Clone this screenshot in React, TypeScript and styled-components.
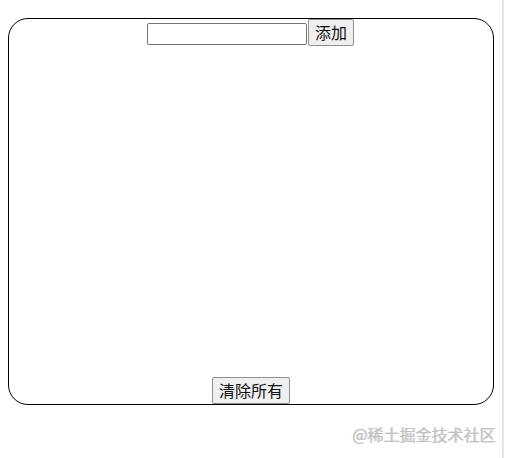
import React, { useState } from "react";
import styled, { createGlobalStyle } from "styled-components";

const GlobalStyle = createGlobalStyle`
  body {
    margin: 8px;
    background: #fff;
    font-family: "Noto Sans CJK SC", "Noto Sans", sans-serif;
  }
`;

const App = () => {
  const [value, setValue] = useState("");
  const [items, setItems] = useState<string[]>([]);

  const handleAdd = () => {
    if (!value.trim()) return;
    setItems((prev) => [...prev, value]);
    setValue("");
  };

  return (
    <>
      <GlobalStyle />
      <Wrapper>
        <TopRow>
          <TextInput value={value} onChange={(e) => setValue(e.target.value)} />
          <Button onClick={handleAdd}>添加</Button>
        </TopRow>
        <List>
          {items.map((item, i) => (
            <Item key={i}>{item}</Item>
          ))}
        </List>
        <Button onClick={() => setItems([])}>清除所有</Button>
      </Wrapper>
      <Watermark>@稀土掘金技术社区</Watermark>
      <ScrollTrack />
    </>
  );
};

const Wrapper = styled.div`
  width: 486px;
  height: 387px;
  margin-top: 10px;
  box-sizing: border-box;
  border: 1px solid #000;
  border-radius: 20px;
  display: flex;
  flex-direction: column;
  align-items: center;
`;

const TopRow = styled.div`
  display: flex;
  align-items: center;
  margin-left: -1px;
`;

const TextInput = styled.input`
  width: 160px;
  height: 22px;
  box-sizing: border-box;
  margin: 2px 1px 0 0;
  padding: 1px 2px;
  border: 1px solid #767676;
  border-radius: 2px;
  font-size: 13px;
`;

const Button = styled.button`
  height: 27px;
  box-sizing: border-box;
  padding: 0 6px;
  font-family: "Noto Sans CJK SC", sans-serif;
  font-size: 16px;
  line-height: 23px;
  color: #111;
  background: #efefef;
  border: 1px solid #8f8f8f;
  border-radius: 2px;
`;

const List = styled.ul`
  flex: 1;
  width: 100%;
  margin: 0;
  padding: 0;
  list-style: none;
`;

const Item = styled.li`
  font-size: 16px;
  padding: 4px 20px;
`;

const Watermark = styled.div`
  position: absolute;
  left: 352px;
  top: 423px;
  font-family: "Noto Sans CJK SC", sans-serif;
  font-size: 16px;
  line-height: 22px;
  white-space: nowrap;
  color: #c2c2c2;
  text-shadow: 1px 0 0 #d6d6d6;
`;

const ScrollTrack = styled.div`
  position: fixed;
  top: 0;
  bottom: 0;
  left: 502px;
  width: 10px;
  border-left: 2px solid #e6e6e6;
  background: #fff;
`;

export default App;
